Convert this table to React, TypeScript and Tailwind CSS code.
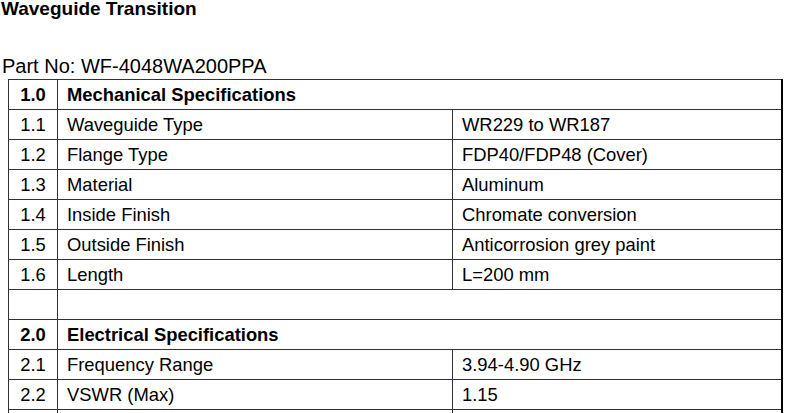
import React from 'react';

type Row =
  | { kind: 'head'; no: string; title: string }
  | { kind: 'item'; no: string; name: string; value: string }
  | { kind: 'blank' };

const rows: Row[] = [
  { kind: 'head', no: '1.0', title: 'Mechanical Specifications' },
  { kind: 'item', no: '1.1', name: 'Waveguide Type', value: 'WR229 to WR187' },
  { kind: 'item', no: '1.2', name: 'Flange Type', value: 'FDP40/FDP48 (Cover)' },
  { kind: 'item', no: '1.3', name: 'Material', value: 'Aluminum' },
  { kind: 'item', no: '1.4', name: 'Inside Finish', value: 'Chromate conversion' },
  { kind: 'item', no: '1.5', name: 'Outside Finish', value: 'Anticorrosion grey paint' },
  { kind: 'item', no: '1.6', name: 'Length', value: 'L=200 mm' },
  { kind: 'blank' },
  { kind: 'head', no: '2.0', title: 'Electrical Specifications' },
  { kind: 'item', no: '2.1', name: 'Frequency Range', value: '3.94-4.90 GHz' },
  { kind: 'item', no: '2.2', name: 'VSWR (Max)', value: '1.15' },
  { kind: 'item', no: '', name: '', value: '' },
];

const SpecRow: React.FC<{ row: Row }> = ({ row }) => {
  const base = 'h-[29px] border-l border-[#333] flex items-center';
  if (row.kind === 'head') {
    return (
      <div className="grid grid-cols-[49px_724px] border-t border-[#333] font-bold">
        <div className={`${base} justify-center pt-[1px]`}>{row.no}</div>
        <div className={`${base} pl-[9px] pt-[1px]`}>{row.title}</div>
      </div>
    );
  }
  if (row.kind === 'blank') {
    return (
      <div className="grid grid-cols-[49px_724px] border-t border-[#333]">
        <div className={base}></div>
        <div className={base}></div>
      </div>
    );
  }
  return (
    <div className="grid grid-cols-[49px_395px_329px] border-t border-[#333]">
      <div className={`${base} justify-center pt-[1px]`}>{row.no}</div>
      <div className={`${base} pl-[9px] pt-[1px]`}>{row.name}</div>
      <div className={`${base} pl-[9px] pt-[1px]`}>{row.value}</div>
    </div>
  );
};

export default function App() {
  return (
    <div className="w-[792px] h-[413px] overflow-hidden bg-white text-black font-['Liberation_Sans',Arial,sans-serif]">
      <h1 className="text-[19px] leading-[18px] font-bold pl-[1px]">Waveguide Transition</h1>
      <p className="mt-[38px] text-[20px] leading-[20px] pl-[2px]">Part No: WF-4048WA200PPA</p>
      <div className="mt-[3px] ml-[8px] w-[775px] border-r-2 border-black text-[18.4px] leading-[20px]">
        {rows.map((r, i) => (
          <SpecRow key={i} row={r} />
        ))}
      </div>
    </div>
  );
}
